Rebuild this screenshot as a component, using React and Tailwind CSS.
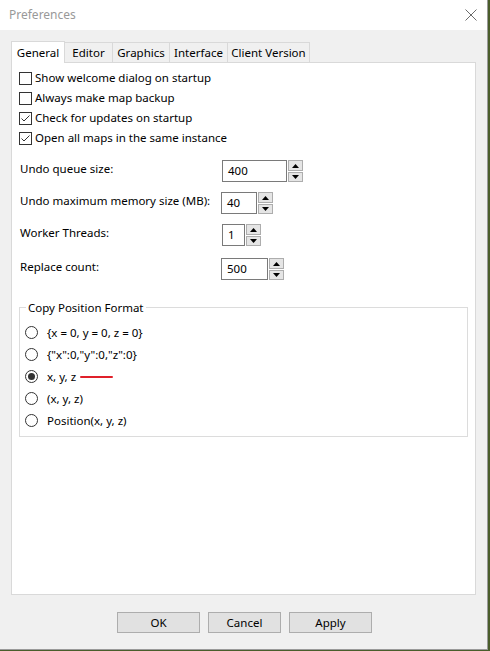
import { useState } from "react";

const font = { fontFamily: '"Noto Sans", "Liberation Sans", sans-serif' };

function Checkbox({ checked, label }) {
  return (
    <label className="flex h-[20px] items-center">
      <span className="flex h-[13px] w-[13px] items-center justify-center border border-[#333333] bg-white">
        {checked && (
          <svg width="11" height="11" viewBox="0 0 11 11">
            <path d="M1.5 5.5 L4 8 L9.5 2.5" fill="none" stroke="#333333" strokeWidth="1" />
          </svg>
        )}
      </span>
      <span className="ml-[3px] text-[11.5px] text-black">{label}</span>
    </label>
  );
}

function Spinner({ value, width }) {
  return (
    <div className="flex h-[22px] items-center">
      <div className={`flex h-[22px] items-center border border-[#7a7a7a] bg-white pl-[5px] text-[11.5px] text-black ${width}`}>
        {value}
      </div>
      <div className="ml-[1px] flex flex-col gap-[1px]">
        <div className="flex h-[11px] w-[15px] items-center justify-center border border-[#adadad] bg-[#e5e5e5]">
          <svg width="7" height="4" viewBox="0 0 7 4"><path d="M0 4 L3.5 0 L7 4 Z" fill="#000" /></svg>
        </div>
        <div className="flex h-[10px] w-[15px] items-center justify-center border border-[#adadad] bg-[#e5e5e5]">
          <svg width="7" height="4" viewBox="0 0 7 4"><path d="M0 0 L3.5 4 L7 0 Z" fill="#000" /></svg>
        </div>
      </div>
    </div>
  );
}

function Radio({ checked, label, onSelect, children }) {
  return (
    <div className="flex h-[22px] items-center pl-[5px]" onClick={onSelect}>
      <span className="flex h-[13px] w-[13px] items-center justify-center rounded-full border border-[#333333] bg-white">
        {checked && <span className="h-[7px] w-[7px] rounded-full bg-[#333333]" />}
      </span>
      <span className="ml-[9px] text-[11.5px] text-black">{label}</span>
      {children}
    </div>
  );
}

export default function App() {
  const [format, setFormat] = useState(2);
  const formats = ["{x = 0, y = 0, z = 0}", '{"x":0,"y":0,"z":0}', "x, y, z", "(x, y, z)", "Position(x, y, z)"];
  const tabs = [
    ["Editor", "w-[48px]"],
    ["Graphics", "w-[57px]"],
    ["Interface", "w-[58px]"],
    ["Client Version", "w-[82px]"],
  ];

  return (
    <div className="h-[651px] w-[490px] bg-[#4a5d2b]" style={font}>
      <div className="flex h-[650px] w-[488px] flex-col border-b border-r border-[#9a9a9a]">
        {/* title bar */}
        <div className="flex h-[30px] items-center justify-between bg-white pl-[9px] pr-[10px]">
          <span className="text-[12px] text-[#999999]">Preferences</span>
          <svg width="12" height="12" viewBox="0 0 12 12">
            <path d="M0.5 0.5 L11.5 11.5 M11.5 0.5 L0.5 11.5" stroke="#6b6b6b" strokeWidth="1" />
          </svg>
        </div>

        <div className="flex flex-1 flex-col bg-[#f0f0f0] px-[11px] pt-[11px]">
          {/* tabs */}
          <div className="relative z-10 flex items-end">
            <div className="-mb-px flex h-[22px] w-[54px] items-start justify-center border border-b-0 border-[#d9d9d9] bg-white pt-[2px] text-[11.5px] text-black">
              General
            </div>
            {tabs.map(([name, w]) => (
              <div key={name} className={`flex h-[20px] items-center justify-center border-r border-t border-[#d9d9d9] bg-[#f0f0f0] text-[11.5px] text-black ${w}`}>
                {name}
              </div>
            ))}
          </div>

          {/* panel */}
          <div className="flex h-[533px] flex-col border border-[#d9d9d9] bg-white px-[7px] pt-[5px]">
            <Checkbox label="Show welcome dialog on startup" />
            <Checkbox label="Always make map backup" />
            <Checkbox checked label="Check for updates on startup" />
            <Checkbox checked label="Open all maps in the same instance" />

            <div className="mt-[12px] flex flex-col gap-[10px] pl-[1px]">
              <div className="flex items-start">
                <span className="w-[202px] text-[11.5px] text-black">Undo queue size:</span>
                <Spinner value="400" width="w-[65px]" />
              </div>
              <div className="flex items-start">
                <span className="w-[201px] text-[11.5px] text-black">Undo maximum memory size (MB):</span>
                <Spinner value="40" width="w-[36px]" />
              </div>
              <div className="flex items-start">
                <span className="w-[202px] text-[11.5px] text-black">Worker Threads:</span>
                <Spinner value="1" width="w-[23px]" />
              </div>
              <div className="mt-[2px] flex items-start">
                <span className="w-[201px] text-[11.5px] text-black">Replace count:</span>
                <Spinner value="500" width="w-[47px]" />
              </div>
            </div>

            <fieldset className="mt-[19px] h-[138px] border border-[#dcdcdc] px-0 pb-0">
              <legend className="ml-[6px] px-[2px] text-[11.5px] text-black">Copy Position Format</legend>
              <div className="flex flex-col pt-[5px]">
                {formats.map((f, i) => (
                  <Radio key={f} label={f} checked={format === i} onSelect={() => setFormat(i)}>
                    {i === 2 && <span className="ml-[4px] mt-[2px] h-[2px] w-[33px] rounded-full bg-[#e0202a]" />}
                  </Radio>
                ))}
              </div>
            </fieldset>
          </div>

          {/* buttons */}
          <div className="mt-[17px] flex gap-[8px] pl-[106px]">
            <button className="h-[21px] w-[83px] border border-[#adadad] bg-[#e1e1e1] text-[11.5px] text-black">OK</button>
            <button className="h-[21px] w-[73px] border border-[#adadad] bg-[#e1e1e1] text-[11.5px] text-black">Cancel</button>
            <button className="h-[21px] w-[83px] border border-[#adadad] bg-[#e1e1e1] text-[11.5px] text-black">Apply</button>
          </div>
        </div>
      </div>
    </div>
  );
}
